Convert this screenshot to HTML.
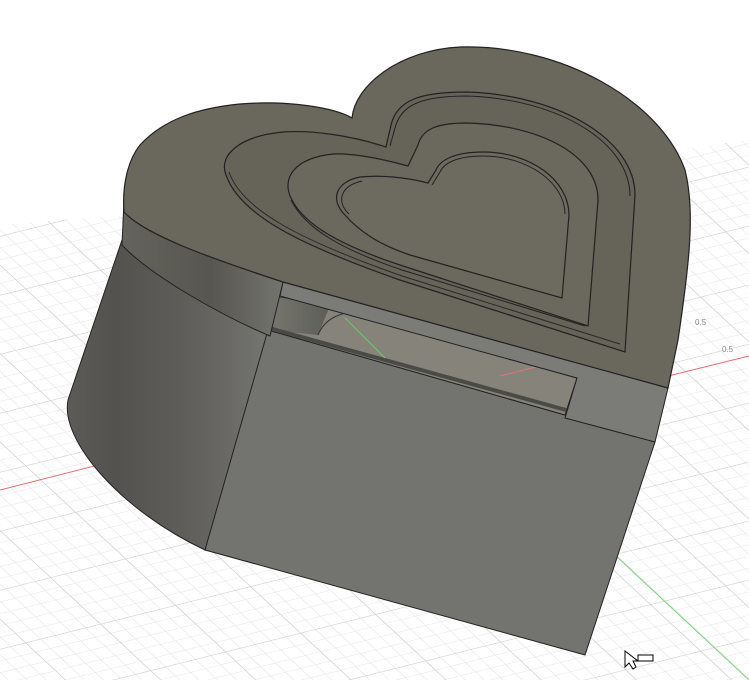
<!DOCTYPE html>
<html><head><meta charset="utf-8"><style>
html,body{margin:0;padding:0;background:#fff;}
svg{display:block}
</style></head><body>
<svg width="749" height="680" viewBox="0 0 749 680" xmlns="http://www.w3.org/2000/svg">
<defs>
<pattern id="g" width="1" height="1" patternUnits="userSpaceOnUse" patternTransform="matrix(15 -3.75 10 9.3 0 0)">
<path d="M0 0H1M0 0V1" stroke="#e2e2e2" stroke-width="0.08" fill="none"/>
</pattern>
<pattern id="G" width="5" height="5" patternUnits="userSpaceOnUse" patternTransform="matrix(15 -3.75 10 9.3 0 0)">
<path d="M0 0H5M0 0V5" stroke="#cfcfcf" stroke-width="0.1" fill="none"/>
</pattern>
<clipPath id="pl"><polygon points="0,225 310,200 749,140 749,680 0,680"/></clipPath>
<linearGradient id="cyl" x1="65" y1="0" x2="270" y2="0" gradientUnits="userSpaceOnUse">
<stop offset="0" stop-color="#5c5b57"/><stop offset="0.25" stop-color="#53524e"/><stop offset="0.6" stop-color="#5f5e5a"/><stop offset="0.9" stop-color="#6f6f6b"/><stop offset="1" stop-color="#767672"/>
</linearGradient>
<linearGradient id="lside" x1="122" y1="0" x2="283" y2="0" gradientUnits="userSpaceOnUse">
<stop offset="0" stop-color="#64635c"/><stop offset="0.55" stop-color="#575650"/><stop offset="1" stop-color="#74746f"/>
</linearGradient>
<linearGradient id="wall" x1="270" y1="0" x2="330" y2="0" gradientUnits="userSpaceOnUse">
<stop offset="0" stop-color="#77776f"/><stop offset="1" stop-color="#5d5d58"/>
</linearGradient>
</defs>
<rect width="749" height="680" fill="#fff"/>
<g clip-path="url(#pl)">
<rect width="749" height="680" fill="url(#g)"/>
<rect width="749" height="680" fill="url(#G)"/>
</g>
<path d="M0 490 L205 438" stroke="#e07070" stroke-width="1"/>
<path d="M615 555 L749 680" stroke="#7ccf7c" stroke-width="1"/>
<path d="M660 378 L749 356" stroke="#e07070" stroke-width="1"/>
<text x="695" y="325" font-family="Liberation Sans" font-size="8" fill="#888">0.5</text>
<text x="722" y="352" font-family="Liberation Sans" font-size="8" fill="#888">0.5</text>

<!-- filler -->
<polygon points="262,278 340,290 340,340 262,340" fill="#6e6e6a"/>
<!-- cylinder body -->
<path d="M122 240 L68 400 C60 440 120 510 205 550 L270 330 L272 300 Z" fill="url(#cyl)" stroke="#222" stroke-width="1"/>
<!-- front face -->
<polygon points="268,330 565,415 655,442 585,655 205,550" fill="#737470" stroke="#222" stroke-width="1"/>
<!-- slot -->
<polygon points="272,296 330,306 577,378 565,415 268,330" fill="#86837b" stroke="#222" stroke-width="1"/>
<polygon points="272,296 330,306 318,335 268,330" fill="url(#wall)"/>
<path d="M269 328 L566 410" stroke="#4a4a46" stroke-width="4"/>
<path d="M318 335 C325 318 340 312 365 310" stroke="#333" fill="none"/>
<path d="M345 318 L385 358" stroke="#6c6" stroke-width="1"/>
<path d="M500 376 L555 362" stroke="#d77" stroke-width="1"/>
<!-- lid front strip -->
<polygon points="283,282 668,388 655,442 565,418 577,378 280,296" fill="#7b7c78" stroke="#222" stroke-width="1"/>
<!-- lid left side -->
<path d="M124 200 L122 245 C150 275 220 315 270 336 L283 282 C220 262 150 235 124 200 Z" fill="url(#lside)" stroke="#222" stroke-width="1"/>
<!-- top face -->
<path d="M283 282 C210 258 145 235 124 212 C122 185 128 160 140 145 C165 118 200 108 240 104 C290 100 335 108 352 118 C355 85 400 50 460 47 C560 44 660 100 685 170 C695 210 690 260 678 340 L668 388 Z" fill="#6a675d" stroke="#222" stroke-width="1.2"/>
<!-- heart 1 -->
<path d="M625 352 L635 195 C635 140 560 95 467 92 C420 92 397 100 391 125 L386 147 C350 135 310 130 283 132 C240 136 218 155 226 175 C240 215 300 245 400 280 Z" fill="#666359" stroke="#222" stroke-width="1.2"/>
<path d="M630 196 C630 143 560 99 467 96 C423 96 401 104 395 128 L390 146" fill="none" stroke="#222" stroke-width="1"/>
<path d="M229 172 C242 210 300 240 402 276 L620 344" fill="none" stroke="#2a2a28" stroke-width="1"/>
<!-- heart 2 -->
<path d="M588 326 L598 200 C598 155 540 125 467 123 C435 123 422 130 418 145 L408 166 C380 158 350 153 333 154 C295 158 280 178 292 200 C305 225 340 245 400 265 Z" fill="#6b685e" stroke="#222" stroke-width="1.2"/>
<path d="M291 200 C305 228 340 249 402 270 L585 326" fill="none" stroke="#222" stroke-width="1"/>
<!-- heart 3 -->
<path d="M562 298 L569 215 C569 180 530 152 483 152 C455 152 440 160 436 170 L428 183 C405 177 380 175 360 177 C335 182 330 200 345 215 C360 232 380 245 410 255 Z" fill="#6d6a60" stroke="#222" stroke-width="1.2"/>
<path d="M565 214 C565 183 528 156 483 156 C457 156 444 163 440 172 L432 185" fill="none" stroke="#222" stroke-width="1"/>
<path d="M362 181 C340 186 336 202 349 214" fill="none" stroke="#222" stroke-width="1"/>
<!-- cursor -->
<path d="M625 651 L625 667 L629 663 L633 669 L636 667 L633 661 L638 661 Z" fill="#fff" stroke="#000" stroke-width="1"/>
<rect x="638" y="655" width="15" height="6" fill="#fff" stroke="#000" stroke-width="1"/>
</svg>
</body></html>
